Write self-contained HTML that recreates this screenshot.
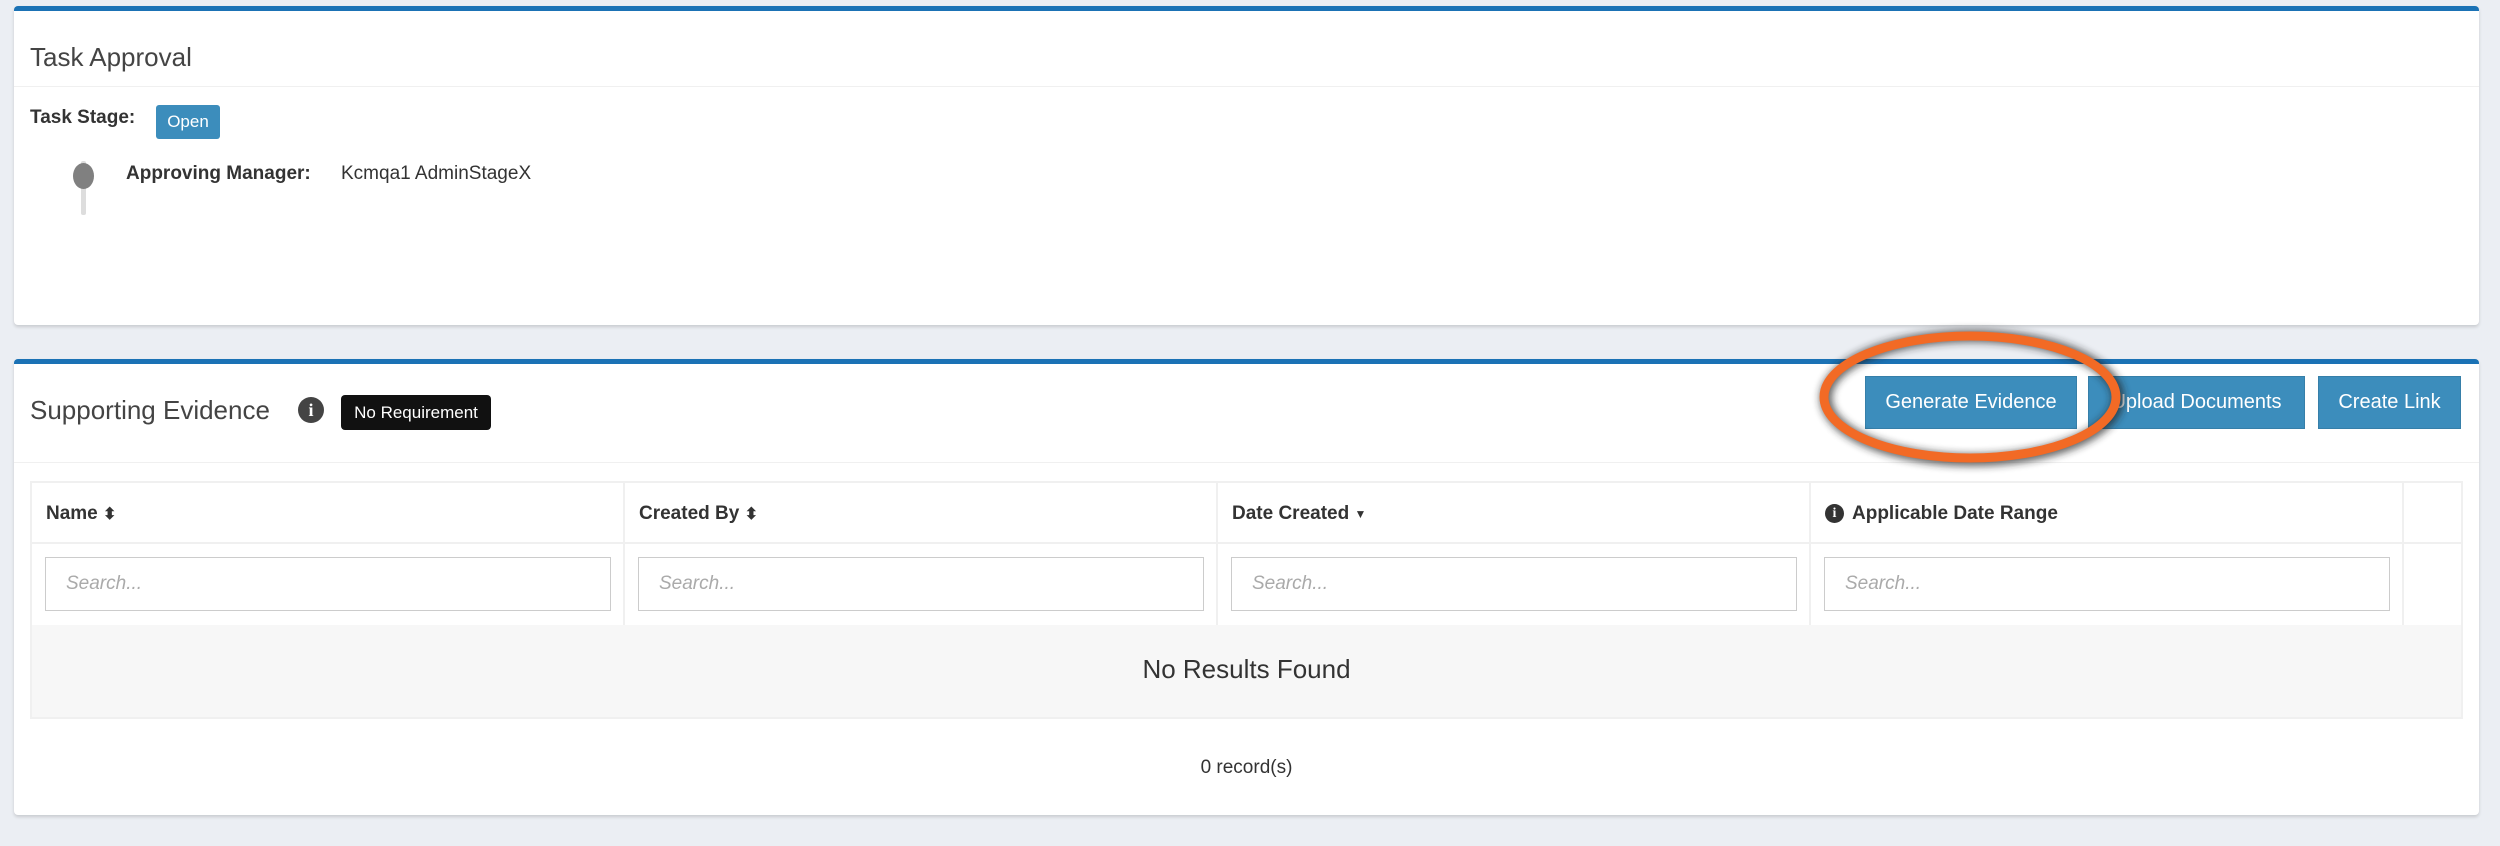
<!DOCTYPE html>
<html><head><meta charset="utf-8"><style>
*{box-sizing:border-box;margin:0;padding:0}
body{width:2500px;height:846px;background:#ebeef3;font-family:"Liberation Sans",sans-serif;color:#333;position:relative;overflow:hidden}
.card{position:absolute;left:14px;width:2465px;background:#fff;border-top:5px solid #1b72b5;border-radius:4px;box-shadow:0 2px 3px rgba(0,0,0,.15)}
.abs{position:absolute;white-space:nowrap}
.btn{position:absolute;top:12px;height:53px;background:#3c8dbc;border:1px solid #367fa9;color:#fff;font-size:20px;display:flex;align-items:center;justify-content:center}
.hd{position:absolute;top:0;height:61px;display:flex;align-items:center;padding-left:14px;font-weight:bold;font-size:19px;border-right:2px solid #f0f0f0}
.inp{position:absolute;top:13px;height:54px;border:1px solid #ccc;font-style:italic;color:#aaa;font-size:19px;padding-left:20px;display:flex;align-items:center}
</style></head><body>
<div class="card" style="top:6px;height:319px">
  <div class="abs" style="left:16px;top:31px;font-size:26px;color:#444">Task Approval</div>
  <div class="abs" style="left:0;right:0;top:75px;border-top:1px solid #f0f0f0"></div>
  <div class="abs" style="left:16px;top:96px;font-size:19px;font-weight:bold">Task Stage:</div>
  <div class="abs" style="left:142px;top:94px;width:64px;height:34px;background:#3c8dbc;border-radius:3px;color:#fff;font-size:17px;display:flex;align-items:center;justify-content:center">Open</div>
  <div class="abs" style="left:67px;top:150px;width:5px;height:54px;background:#ddd;border-radius:2px"></div>
  <div class="abs" style="left:59px;top:152px;width:21px;height:26px;background:#808080;border-radius:50%"></div>
  <div class="abs" style="left:112px;top:152px;font-size:19px;font-weight:bold">Approving Manager:</div>
  <div class="abs" style="left:327px;top:152px;font-size:19px">Kcmqa1 AdminStageX</div>
</div>
<div class="card" style="top:359px;height:456px">
  <div class="abs" style="left:16px;top:31px;font-size:26px;color:#444">Supporting Evidence</div>
  <div class="abs" style="left:284px;top:33px;width:26px;height:26px;border-radius:50%;background:#444;color:#fff;font-weight:bold;font-size:18px;text-align:center;line-height:26px;font-family:'Liberation Serif',serif">i</div>
  <div class="abs" style="left:327px;top:31px;width:150px;height:35px;background:#111;border-radius:4px;color:#fff;font-size:17px;display:flex;align-items:center;justify-content:center">No Requirement</div>
  <div class="btn" style="left:1851px;width:212px">Generate Evidence</div>
  <div class="btn" style="left:2074px;width:217px">Upload Documents</div>
  <div class="btn" style="left:2304px;width:143px">Create Link</div>
  <div class="abs" style="left:0;right:0;top:98px;border-top:1px solid #f0f0f0"></div>
  <div class="abs" style="left:16px;top:117px;width:2433px;height:238px;border:2px solid #f0f0f0">
    <div style="position:absolute;left:0;right:0;top:0;height:61px;border-bottom:2px solid #f0f0f0">
      <div class="hd" style="left:0;width:593px">Name&nbsp;<span style="font-size:16px">⬍</span></div>
      <div class="hd" style="left:593px;width:593px">Created By&nbsp;<span style="font-size:16px">⬍</span></div>
      <div class="hd" style="left:1186px;width:593px">Date Created&nbsp;<span style="font-size:12px">▼</span></div>
      <div class="hd" style="left:1779px;width:593px"><span style="display:inline-block;width:19px;height:19px;border-radius:50%;background:#333;color:#fff;font-size:14px;text-align:center;line-height:19px;margin-right:8px;font-family:'Liberation Serif',serif">i</span>Applicable Date Range</div>
    </div>
    <div style="position:absolute;left:0;right:0;top:61px;height:81px">
      <div class="hd" style="left:0;width:593px;height:81px;padding:0"></div>
      <div class="hd" style="left:593px;width:593px;height:81px;padding:0"></div>
      <div class="hd" style="left:1186px;width:593px;height:81px;padding:0"></div>
      <div class="hd" style="left:1779px;width:593px;height:81px;padding:0"></div>
      <div class="inp" style="left:13px;width:566px">Search...</div>
      <div class="inp" style="left:606px;width:566px">Search...</div>
      <div class="inp" style="left:1199px;width:566px">Search...</div>
      <div class="inp" style="left:1792px;width:566px">Search...</div>
    </div>
    <div style="position:absolute;left:0;right:0;top:142px;bottom:0;background:#f7f7f7;display:flex;align-items:center;justify-content:center;font-size:26px;padding-bottom:3px">No Results Found</div>
  </div>
  <div class="abs" style="left:0;width:2465px;top:393px;text-align:center;font-size:19px">0 record(s)</div>
</div>
<svg class="abs" style="left:0;top:0" width="2500" height="846">
  <defs><filter id="s" x="-20%" y="-30%" width="140%" height="160%"><feGaussianBlur stdDeviation="4"/></filter></defs>
  <ellipse cx="1972" cy="398" rx="146" ry="62" fill="none" stroke="#222" stroke-width="12" opacity=".7" filter="url(#s)"/>
  <ellipse cx="1970" cy="397" rx="146" ry="61" fill="none" stroke="#f26a25" stroke-width="9"/>
</svg>
</body></html>
